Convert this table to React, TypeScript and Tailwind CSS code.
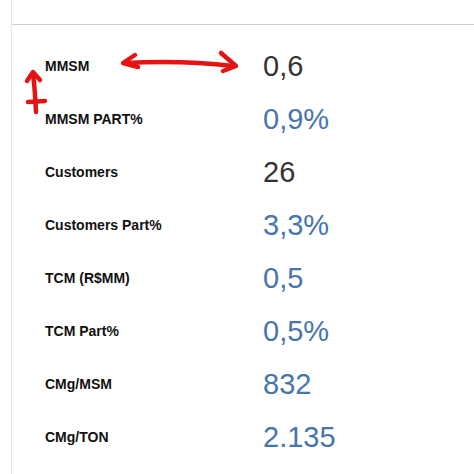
const rows = [
  { label: "MMSM", value: "0,6", blue: false },
  { label: "MMSM PART%", value: "0,9%", blue: true },
  { label: "Customers", value: "26", blue: false },
  { label: "Customers Part%", value: "3,3%", blue: true },
  { label: "TCM (R$MM)", value: "0,5", blue: true },
  { label: "TCM Part%", value: "0,5%", blue: true },
  { label: "CMg/MSM", value: "832", blue: true },
  { label: "CMg/TON", value: "2.135", blue: true },
];

export default function App() {
  return (
    <div
      className="relative w-[474px] h-[474px] overflow-hidden bg-white pl-[11px]"
      style={{ fontFamily: "'Liberation Sans', Arial, sans-serif" }}
    >
      {/* Card */}
      <div className="h-full border-l border-[#e8e8e8]">
        <div className="h-[25px] border-b border-[#cfcfcf]" />
        <div className="pt-[15px] pl-[33px]">
          {rows.map((row) => (
            <div key={row.label} className="flex items-center h-[53px]">
              <div className="w-[218px] text-[14px] font-bold text-[#111]">
                {row.label}
              </div>
              <div
                className={`text-[29px] leading-none ${
                  row.blue ? "text-[#4676ab]" : "text-[#333]"
                }`}
              >
                {row.value}
              </div>
            </div>
          ))}
        </div>
      </div>

      {/* Red annotation marks */}
      <svg
        className="absolute inset-0 pointer-events-none"
        width="474"
        height="474"
        viewBox="0 0 474 474"
      >
        <g
          fill="none"
          stroke="#e41414"
          strokeWidth="4.5"
          strokeLinecap="round"
          strokeLinejoin="round"
        >
          <path d="M125 63 C 160 61, 200 62, 233 66" />
          <path d="M135 55 L123 63 L138 67" />
          <path d="M221 53 L236 66 L223 71" />
          <path d="M27 81 L33 72 L40 80" />
          <path d="M33 73 Q 35 90 36 112" />
          <path d="M28 102 L45 101" />
        </g>
      </svg>
    </div>
  );
}
